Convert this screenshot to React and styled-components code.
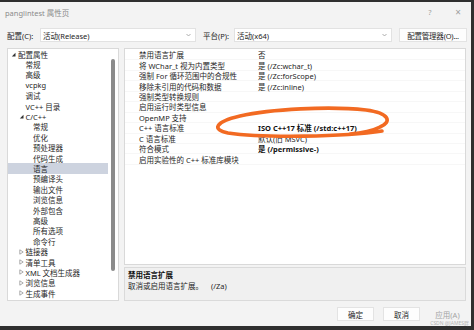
import React from 'react';
import styled, { createGlobalStyle } from 'styled-components';

const GlobalStyle = createGlobalStyle`
  html, body { margin: 0; padding: 0; background: #2f2f2f; }
  body { width: 474px; height: 330px; overflow: hidden; }
  * { box-sizing: border-box; }
`;

const FONT = `"Noto Sans", "Noto Sans CJK SC", sans-serif`;

const Page = styled.div`
  position: relative;
  width: 474px;
  height: 330px;
  padding-top: 2px;
  font-family: ${FONT};
  font-size: 7.5px;
  color: #262626;
`;

const Dialog = styled.div`
  width: 471px;
  height: 324px;
  background: #f3f3f3;
  display: flex;
  flex-direction: column;
`;

const TitleBar = styled.div`
  height: 24px;
  display: flex;
  align-items: center;
  padding: 0 6px 0 5px;
  color: #8a8a8a;
  font-size: 7.5px;
`;

const Title = styled.div`
  flex: 1;
  margin-top: -4px;
`;

const TitleBtn = styled.div`
  width: ${p => p.$w}px;
  text-align: center;
  color: #a0a0a0;
  font-size: ${p => p.$big ? '10px' : '7.5px'};
  margin-left: ${p => p.$gap || 0}px;
  margin-top: -4px;
`;

const ConfigRow = styled.div`
  height: 16px;
  display: flex;
  align-items: center;
  padding: 0 4px 0 7px;
  margin-top: 1px;
`;

const Label = styled.div`
  width: ${p => p.$w}px;
  margin-left: ${p => p.$ml || 0}px;
  flex: none;
`;

const Combo = styled.div`
  width: ${p => p.$w}px;
  height: 14px;
  background: #ffffff;
  border: 1px solid #e2e2e2;
  display: flex;
  align-items: center;
  padding: 0 4px 0 2px;
  flex: none;
`;

const ComboText = styled.div`
  flex: 1;
`;

const Chevron = () => (
  <svg width="5" height="4" viewBox="0 0 5 4">
    <path d="M0.5 1 L2.5 3 L4.5 1" fill="none" stroke="#9a9a9a" strokeWidth="0.8" />
  </svg>
);

const Button = styled.div`
  width: ${p => p.$w}px;
  height: 14px;
  margin-left: ${p => p.$ml || 0}px;
  background: ${p => p.$disabled ? '#f3f3f3' : '#fdfdfd'};
  border: 1px solid ${p => p.$disabled ? '#f3f3f3' : '#e3e3e3'};
  color: ${p => p.$disabled ? '#a3a3a3' : '#262626'};
  display: flex;
  align-items: center;
  justify-content: center;
  flex: none;
  white-space: nowrap;
  letter-spacing: ${p => p.$tight ? '-0.2px' : '0'};
`;

const Main = styled.div`
  display: flex;
  gap: 5px;
  padding: 0 5px 0 7px;
  margin-top: 5px;
  height: 253px;
`;

const TreePanel = styled.div`
  width: 112px;
  height: 100%;
  background: #ffffff;
  border: 1px solid #d9d9d9;
  display: flex;
`;

const TreeList = styled.div`
  width: 100px;
`;

const TreeRow = styled.div`
  height: 10.4px;
  display: flex;
  align-items: center;
  padding-left: ${p => 3 + p.$level * 7.5}px;
  background: ${p => p.$sel ? '#cdd3df' : 'transparent'};
  white-space: nowrap;
`;

const Expander = styled.div`
  width: 7px;
  flex: none;
  display: flex;
  align-items: center;
`;

const ScrollTrack = styled.div`
  flex: 1;
  display: flex;
  justify-content: center;
  padding-top: 10px;
`;

const ScrollThumb = styled.div`
  width: 4px;
  height: 212px;
  background: #8b8b8b;
  border-radius: 2px;
`;

const RightCol = styled.div`
  flex: 1;
  display: flex;
  flex-direction: column;
  gap: 2px;
`;

const GridPanel = styled.div`
  height: 217px;
  background: #ffffff;
  border: 1px solid #d9d9d9;
  padding-top: 1px;
`;

const GridRow = styled.div`
  height: 10.45px;
  display: flex;
  align-items: center;
  border-bottom: 1px solid #f7f7f7;
  white-space: nowrap;
`;

const NameCell = styled.div`
  width: 133px;
  padding-left: 14px;
  flex: none;
`;

const ValueCell = styled.div`
  font-weight: ${p => p.$bold ? 700 : 400};
  color: ${p => p.$bold ? '#111' : 'inherit'};
`;

const DescPanel = styled.div`
  flex: 1;
  border: 1px solid #dadada;
  background: #f0f0f0;
  padding: 2px 3px;
  line-height: 10.5px;
`;

const DescTitle = styled.div`
  font-weight: 700;
  color: #111;
`;

const DescText = styled.div`
  display: flex;
`;

const DescSpan = styled.span`
  width: ${p => p.$w}px;
`;

const ButtonRow = styled.div`
  display: flex;
  justify-content: flex-end;
  padding: 0 5px 0 0;
  margin-top: 6px;
`;

const Watermark = styled.div`
  position: absolute;
  right: 5px;
  bottom: 4px;
  font-size: 5px;
  color: #b4b4b4;
  font-family: ${FONT};
`;

const Annotation = styled.svg`
  position: absolute;
  left: 0;
  top: 0;
  pointer-events: none;
`;

const OpenTri = () => (
  <svg width="5" height="5" viewBox="0 0 5 5">
    <path d="M4.5 0.8 L4.5 4.5 L0.8 4.5 Z" fill="#333" />
  </svg>
);

const ClosedTri = () => (
  <svg width="5" height="6" viewBox="0 0 5 6">
    <path d="M0.8 0.8 L4.2 3 L0.8 5.2 Z" fill="none" stroke="#8a8a8a" strokeWidth="0.7" />
  </svg>
);

const tree = [
  { t: '配置属性', l: 0, e: 'open' },
  { t: '常规', l: 1 },
  { t: '高级', l: 1 },
  { t: 'vcpkg', l: 1 },
  { t: '调试', l: 1 },
  { t: 'VC++ 目录', l: 1 },
  { t: 'C/C++', l: 1, e: 'open' },
  { t: '常规', l: 2 },
  { t: '优化', l: 2 },
  { t: '预处理器', l: 2 },
  { t: '代码生成', l: 2 },
  { t: '语言', l: 2, s: true },
  { t: '预编译头', l: 2 },
  { t: '输出文件', l: 2 },
  { t: '浏览信息', l: 2 },
  { t: '外部包含', l: 2 },
  { t: '高级', l: 2 },
  { t: '所有选项', l: 2 },
  { t: '命令行', l: 2 },
  { t: '链接器', l: 1, e: 'closed' },
  { t: '清单工具', l: 1, e: 'closed' },
  { t: 'XML 文档生成器', l: 1, e: 'closed' },
  { t: '浏览信息', l: 1, e: 'closed' },
  { t: '生成事件', l: 1, e: 'closed' },
];

const props = [
  ['禁用语言扩展', '否'],
  ['将 WChar_t 视为内置类型', '是 (/Zc:wchar_t)'],
  ['强制 For 循环范围中的合规性', '是 (/Zc:forScope)'],
  ['移除未引用的代码和数据', '是 (/Zc:inline)'],
  ['强制类型转换规则', ''],
  ['启用运行时类型信息', ''],
  ['OpenMP 支持', ''],
  ['C++ 语言标准', 'ISO C++17 标准 (/std:c++17)', true],
  ['C 语言标准', '默认(旧 MSVC)'],
  ['符合模式', '是 (/permissive-)', true],
  ['启用实验性的 C++ 标准库模块', ''],
];

export default function App() {
  return (
    <Page>
      <GlobalStyle />
      <Dialog>
        <TitleBar>
          <Title>panglintest 属性页</Title>
          <TitleBtn $w={10}>?</TitleBtn>
          <TitleBtn $w={14} $big $gap={16}>×</TitleBtn>
        </TitleBar>
        <ConfigRow>
          <Label $w={33}>配置(C):</Label>
          <Combo $w={156}>
            <ComboText>活动(Release)</ComboText>
            <Chevron />
          </Combo>
          <Label $w={31} $ml={7}>平台(P):</Label>
          <Combo $w={158}>
            <ComboText>活动(x64)</ComboText>
            <Chevron />
          </Combo>
          <Button $w={68} $ml={7} $tight>配置管理器(O)...</Button>
        </ConfigRow>
        <Main>
          <TreePanel>
            <TreeList>
              {tree.map((n, i) => (
                <TreeRow key={i} $level={n.l} $sel={n.s}>
                  <Expander>
                    {n.e === 'open' && <OpenTri />}
                    {n.e === 'closed' && <ClosedTri />}
                  </Expander>
                  {n.t}
                </TreeRow>
              ))}
            </TreeList>
            <ScrollTrack>
              <ScrollThumb />
            </ScrollTrack>
          </TreePanel>
          <RightCol>
            <GridPanel>
              {props.map(([n, v, b], i) => (
                <GridRow key={i}>
                  <NameCell>{n}</NameCell>
                  <ValueCell $bold={b}>{v}</ValueCell>
                </GridRow>
              ))}
            </GridPanel>
            <DescPanel>
              <DescTitle>禁用语言扩展</DescTitle>
              <DescText>
                <DescSpan $w={83}>取消或启用语言扩展。</DescSpan>
                <span>(/Za)</span>
              </DescText>
            </DescPanel>
          </RightCol>
        </Main>
        <ButtonRow>
          <Button $w={37}>确定</Button>
          <Button $w={37} $ml={9}>取消</Button>
          <Button $w={37} $ml={9} $disabled>应用(A)</Button>
        </ButtonRow>
      </Dialog>
      <Annotation width="474" height="330" viewBox="0 0 474 330">
        <path
          d="M 382 131 C 345 137, 262 138, 228 133 C 212 130, 214 122, 240 116 C 270 109, 330 106, 366 110 C 390 113, 392 122, 380 127 C 372 131, 362 133, 350 134"
          fill="none"
          stroke="#f26a22"
          strokeWidth="3.6"
          strokeLinecap="round"
        />
      </Annotation>
      <Watermark>CSDN @JAMES胖</Watermark>
    </Page>
  );
}
